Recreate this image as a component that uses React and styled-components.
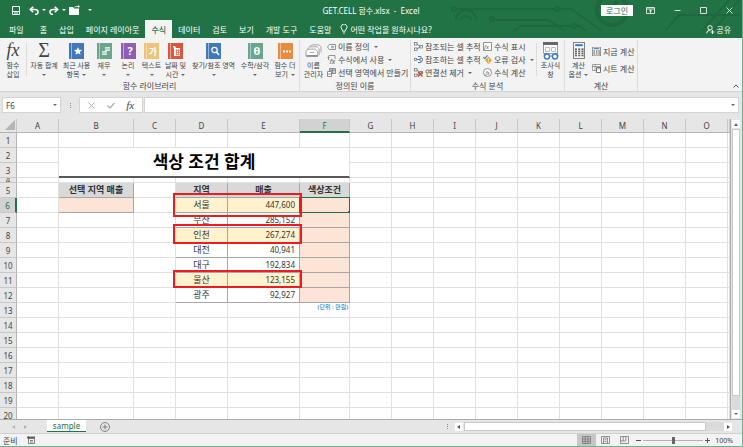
import React, { useState } from "react";
import styled, { createGlobalStyle } from "styled-components";

const GlobalStyle = createGlobalStyle`
  * { box-sizing: border-box; }
  body {
    margin: 0;
    background: #e6e6e6;
    color: #444;
    font-family: "Noto Sans", "Noto Sans CJK KR", sans-serif;
    font-size: 8px;
    line-height: 9px;
  }
  button, input {
    margin: 0;
    padding: 0;
    border: 0;
    background: none;
    color: inherit;
    font: inherit;
    line-height: inherit;
  }
  svg { display: block; flex: none; }
`;

const Window = styled.div`
  display: flex;
  flex-direction: column;
  height: 100vh;
  overflow: hidden;
  border-right: 1px solid #6fb08c;
  border-bottom: 1px solid #6fb08c;
`;

/* ---------- header ---------- */

const Header = styled.header`
  position: relative;
  background: #217346;
  color: #fff;
`;

const Circuit = styled.svg`
  position: absolute;
  top: 0;
  right: 0;
  fill: none;
  stroke: #1e683f;
  stroke-width: 2;
`;

const TitleBar = styled.div`
  position: relative;
  display: grid;
  grid-template-columns: 1fr auto 1fr;
  align-items: center;
  height: 20px;
`;

const QuickAccess = styled.div`
  display: flex;
  align-items: center;
  gap: 3px;
  padding-left: 11px;
`;

const BarButton = styled.button`
  display: flex;
  align-items: center;
  gap: 3px;
  margin-right: ${props => props.$after || 0}px;
`;

const WindowControls = styled.div`
  display: flex;
  align-items: center;
  justify-content: flex-end;
  gap: 19px;
  padding-right: 9px;
`;

const LoginButton = styled.button`
  height: 11px;
  padding: 0 5px;
  background: #fff;
  color: #217346;
  margin-right: -6px;
`;

const TabBar = styled.nav`
  position: relative;
  display: flex;
  height: 18px;
  padding-left: 3px;
`;

const Tab = styled.button`
  padding: 0 6px;
  background: ${props => (props.$active ? "#f3f3f3" : "none")};
  color: ${props => (props.$active ? "#217346" : "#fff")};
  font-weight: ${props => (props.$active ? 500 : 400)};
  white-space: nowrap;

  &:first-child { padding-right: 10px; }
`;

const TellMe = styled(BarButton)`
  margin-left: 3px;
  gap: 2px;
`;

const ShareButton = styled(BarButton)`
  gap: 1px;
  margin-left: auto;
  padding-right: 11px;
`;

/* ---------- ribbon ---------- */

const Ribbon = styled.div`
  display: flex;
  padding: 2px 0 0;
  background: #f3f3f3;
  border-bottom: 1px solid #d2d2d2;
  white-space: nowrap;
`;

const Group = styled.section`
  position: relative;
  border-right: 1px solid #dcdcdc;
`;

const GroupBody = styled.div`
  display: flex;
  height: 39px;
`;

const GroupLabel = styled.div`
  margin: 2px 0 1px;
  text-align: center;
`;

const Tool = styled.button`
  display: flex;
  flex-direction: column;
  align-items: center;
  width: ${props => props.$width}px;
  padding-top: 2px;
  overflow: visible;
`;

const ToolIcon = styled.span`
  display: flex;
  align-items: center;
  justify-content: center;
  height: 17px;
  margin-bottom: 2px;
`;

const ToolLine = styled.span`
  display: flex;
  align-items: center;
  justify-content: center;
  gap: 3px;
  height: 9px;
  font-size: 7px;
`;

const Fx = styled.span`
  font: italic 18px/17px "Liberation Serif", serif;
`;

const Sigma = styled.span`
  font: 20px/17px "Liberation Serif", serif;
`;

const Rule = styled.div`
  width: 1px;
  margin: 3px 0;
  background: #dcdcdc;
`;

const List = styled.div`
  display: flex;
  flex-direction: column;
  width: ${props => props.$width}px;
  padding-top: ${props => props.$top || 0}px;
  padding-left: ${props => props.$left || 0}px;
`;

const ListItem = styled.button`
  display: flex;
  align-items: center;
  gap: 2px;
  height: ${props => props.$height || 13}px;

  i { margin-left: 2px; }
`;

const Caret = styled.i`
  width: 0;
  height: 0;
  border: 2px solid transparent;
  border-top-color: ${props => props.$color || "#666"};
  border-bottom: 0;
`;

const CollapseButton = styled.button`
  align-self: flex-end;
  margin-left: auto;
  padding: 0 3px 3px;
`;

/* ---------- formula bar ---------- */

const FormulaBar = styled.div`
  display: flex;
  align-items: center;
  padding: 5px 3px 6px 2px;
`;

const Field = styled.div`
  display: flex;
  align-items: center;
  height: 16px;
  border: 1px solid #d4d4d4;
  background: #fff;
`;

const NameBox = styled(Field)`
  width: 59px;
  padding: 0 3px;

  input { width: 100%; min-width: 0; outline: 0; }
`;

const FormulaTools = styled(Field)`
  width: 64px;
  justify-content: space-around;
  padding: 0 2px;

  span { font: italic 11px/12px "Liberation Serif", serif; }
`;

const FormulaField = styled(Field)`
  flex: 1;
  margin-left: 1px;
  padding-right: 3px;

  input { flex: 1; outline: 0; }
`;

const Grip = styled.div`
  display: flex;
  flex-direction: column;
  align-items: center;
  gap: 1px;
  width: ${props => props.$width}px;

  i { width: 1px; height: 1px; background: #888; }
`;

/* ---------- sheet ---------- */

const SheetArea = styled.main`
  display: flex;
  flex: 1;
  min-height: 0;
`;

const SheetClip = styled.div`
  flex: 1;
  min-width: 0;
  overflow: hidden;
  border-right: 1px solid #ababab;
`;

const Grid = styled.table`
  width: 100%;
  table-layout: fixed;
  border-spacing: 0;
  background: #fff;
  font-size: 9px;
`;

const ColumnHead = styled.th`
  height: 14px;
  padding: 0;
  border-right: 1px solid #c8c8c8;
  border-bottom: ${props => (props.$active ? "2px solid #217346" : "1px solid #b4b4b4")};
  background: ${props => (props.$active ? "#d2d2d2" : "#e6e6e6")};
  color: ${props => (props.$active ? "#217346" : "#444")};
  font-size: 8px;
  font-weight: 400;
`;

const RowHead = styled.th`
  padding: 0;
  border-right: ${props => (props.$active ? "2px solid #217346" : "1px solid #b4b4b4")};
  border-bottom: 1px solid #c8c8c8;
  background: ${props => (props.$active ? "#d2d2d2" : "#e6e6e6")};
  color: ${props => (props.$active ? "#217346" : "#444")};
  font-size: 8px;
  font-weight: 400;
  vertical-align: bottom;

  div {
    height: ${props => (props.$thin ? 4 : 12)}px;
    line-height: ${props => (props.$thin ? 4 : 12)}px;
    overflow: hidden;
  }
`;

const Corner = styled(ColumnHead)`
  svg { margin: 0 0 0 auto; }
`;

const Row = styled.tr`
  height: ${props => (props.$thin ? 5 : 15)}px;
`;

const fills = {
  head: "#d9d9d9",
  yellow: "#fff2cc",
  peach: "#fce4d6"
};

const Cell = styled.td`
  position: relative;
  padding: 0 4px;
  border-right: 1px solid ${props => (props.$boxed ? "#a6a6a6" : "#e0e0e0")};
  border-bottom: 1px solid ${props => (props.$boxed ? "#a6a6a6" : "#e0e0e0")};
  background: ${props => fills[props.$fill] || "#fff"};
  background-clip: padding-box;
  color: #333;
  font-size: ${props => (props.$number ? 8 : 9)}px;
  font-weight: ${props => (props.$fill === "head" ? 700 : 400)};
  line-height: 12px;
  text-align: ${props => (props.$number ? "right" : "center")};
  white-space: nowrap;
`;

const TitleCell = styled(Cell)`
  border-bottom: 2px solid #595959;
  color: #000;
  font-size: 17px;
  font-weight: 700;
  line-height: 20px;
`;

const UnitCell = styled(Cell)`
  padding: 0 1px;
  color: #0070c0;
  font-size: 6px;
  line-height: 8px;
  text-align: right;
  vertical-align: top;
`;

const Highlight = styled.div`
  position: absolute;
  z-index: 2;
  top: ${props => props.$top}px;
  left: -3px;
  width: 129px;
  height: ${props => props.$height}px;
  border: 2px solid #ed1c24;
`;

const Selection = styled.div`
  position: absolute;
  z-index: 1;
  inset: -1px;
  border: 1px solid #217346;

  &::after {
    content: "";
    position: absolute;
    right: -1px;
    bottom: -1px;
    width: 2px;
    height: 2px;
    background: #217346;
  }
`;

const VScroll = styled.div`
  display: flex;
  flex-direction: column;
  width: 11px;
  padding: 1px 2px 1px 1px;
  background: #e6e6e6;
`;

const ScrollButton = styled.button`
  display: flex;
  align-items: center;
  justify-content: center;
  flex: none;
  width: 8px;
  height: 8px;
  background: #fff;
`;

const VTrack = styled.div`
  display: flex;
  flex: 1;
  flex-direction: column;
  margin: 1px 0 0;
  background: #dadada;
`;

const Thumb = styled.div`
  flex: 0 0 ${props => props.$size}%;
  border: 1px solid #c8c8c8;
  background: #fff;
`;

const TabStrip = styled.div`
  display: flex;
  align-items: center;
  height: 14px;
  border-top: 1px solid #ababab;
  padding-right: 10px;
`;

const SheetNav = styled.div`
  display: flex;
  gap: 9px;
  width: 47px;
  padding-left: 12px;
`;

const SheetTab = styled.button`
  align-self: flex-start;
  width: 39px;
  height: 12px;
  border-bottom: 1px solid #217346;
  background: #fff;
  color: #217346;
`;

const AddSheet = styled.button`
  margin-left: 14px;
`;

const HScroll = styled.div`
  display: flex;
  align-items: center;
  flex: 0 0 39%;
  margin-left: auto;
`;

const HTrack = styled.div`
  display: flex;
  flex: 1;
  height: 9px;
  margin: 0 0 0 1px;
  background: #dadada;
`;

/* ---------- status bar ---------- */

const StatusBar = styled.footer`
  display: flex;
  align-items: center;
  height: 13px;
  padding: 0 9px 0 3px;
  border-top: 1px solid #d0d0d0;
  background: #f3f3f3;
`;

const Views = styled.div`
  display: flex;
  align-self: stretch;
  margin-left: auto;
`;

const ViewButton = styled.button`
  display: flex;
  align-items: center;
  justify-content: center;
  width: 19px;
  background: ${props => (props.$active ? "#c6c6c6" : "none")};
`;

const Zoom = styled.div`
  display: flex;
  align-items: center;
  gap: 2px;
  margin-left: 2px;
`;

const ZoomSlider = styled.input`
  width: 60px;
  height: 9px;
  appearance: none;
  background: linear-gradient(#b4b4b4, #b4b4b4) center / 100% 1px no-repeat;

  &::-webkit-slider-thumb {
    appearance: none;
    width: 3px;
    height: 7px;
    background: #666;
  }
`;

const ZoomValue = styled.span`
  margin-left: 3px;
  font-size: 7px;
`;

/* ---------- icons ---------- */

const Book = ({ color, spine, children }) => (
  <svg width="15" height="16" viewBox="0 0 15 16">
    <rect width="2" height="16" fill={spine || color} />
    <rect x="2.500" width="12.500" height="16" fill={color} />
    {children}
  </svg>
);

const BookText = ({ children, size = 11 }) => (
  <text x="9" y="12" fill="#fff" fontSize={size} fontWeight="700" textAnchor="middle">{children}</text>
);

const NameTagIcon = () => (
  <svg width="9" height="8" viewBox="0 0 9 8" fill="#fff" stroke="#777">
    <path d="M2.5 1.5h6v5h-6l-2-2.5z" strokeWidth=".8" />
    <path d="M4 3.3h3.2M4 4.8h3.2" stroke="#4a86c5" strokeWidth=".8" />
  </svg>
);

const UseInFormulaIcon = () => (
  <svg width="9" height="9" viewBox="0 0 9 9" fill="none" stroke="#777" strokeWidth=".8">
    <path d="M.5 2.5h2M1.5 5V1.5q0-1 1-1h5.500v3.500" />
    <text x="2.500" y="8.500" fontSize="7" fontStyle="italic" fill="#555" stroke="none">fx</text>
  </svg>
);

const FromSelectionIcon = () => (
  <svg width="9" height="9" viewBox="0 0 9 9" fill="#fff" stroke="#777" strokeWidth=".8">
    <path d="M2.500 .5h6v5h-6z" fill="#c4daf0" />
    <path d="M2.500 2.200h6M5.500 .5v5" />
    <path d="M.5 3.500h4v5h-4zM.5 6h4" />
  </svg>
);

const TraceIcon = ({ kind }) => (
  <svg width="9" height="9" viewBox="0 0 9 9" fill="#fff" stroke="#777" strokeWidth=".8">
    {kind === "dependents" ? (
      <g>
        <rect x=".5" y="3.500" width="2" height="2" />
        <rect x="6" y="3.500" width="2.500" height="2.500" />
        <path d="M3 4.500h3M4 1.500h3v2M4 7.500h3v-2" stroke="#3f7fc4" strokeWidth="1" />
      </g>
    ) : (
      <g>
        <rect x=".5" y=".5" width="2.500" height="2.500" />
        <rect x=".5" y="6" width="2.500" height="2.500" />
        <rect x="6" y="3.500" width="2.500" height="2.500" />
        <path d="M3 2l3 2.500M3 7l3-2" stroke="#3f7fc4" strokeWidth="1" />
      </g>
    )}
    {kind === "remove" && <path d="M4 4l4.500 4.500M8.500 4L4 8.500" stroke="#d9472b" strokeWidth="1.400" />}
  </svg>
);

const ShowFormulaIcon = () => (
  <svg width="9" height="9" viewBox="0 0 9 9" fill="#fff" stroke="#777" strokeWidth=".8">
    <path d="M.5 .5h8v8h-8z" />
    <text x="1" y="7" fontSize="6" fontStyle="italic" fill="#555" stroke="none">fx</text>
  </svg>
);

const ErrorCheckIcon = () => (
  <svg width="9" height="9" viewBox="0 0 9 9" fill="none">
    <path d="M5.500 1.500L9 5.200 5.500 9 2 5.200z" fill="#f0a030" />
    <path d="M5.500 3.500v2M5.500 6.500v1" stroke="#fff" strokeWidth=".8" />
    <path d="M.3 2l1.500 1.700L4.500 .4" stroke="#3f7fc4" strokeWidth="1.100" />
  </svg>
);

const EvaluateIcon = () => (
  <svg width="9" height="9" viewBox="0 0 9 9">
    <circle cx="4.500" cy="4.500" r="4" fill="#fff" stroke="#777" strokeWidth=".8" />
    <text x="4.500" y="6.500" fontSize="5" fontStyle="italic" textAnchor="middle" fill="#555">fx</text>
  </svg>
);

const NameManagerIcon = () => (
  <svg width="17" height="14" viewBox="0 0 18 15" fill="#fff" stroke="#909090" strokeWidth=".9">
    <path d="M5 7V3l2-2h8l2 2v6" />
    <path d="M3 9V5l2-2h8l2 2v7" />
    <path d="M1 13V8l2-2.500h8L13.500 8v5z" />
    <path d="M1.500 12.800h12" strokeWidth="2" />
    <path d="M5 9h5" />
  </svg>
);

const WatchIcon = () => (
  <svg width="18" height="18" viewBox="0 0 18 18" fill="none">
    <path d="M1.500 .5h14v11h-14z" fill="#fff" stroke="#999" />
    <path d="M1 0h15v3H1z" fill="#666" />
    <path d="M3.500 5.500h4v4h-4zM9.500 5.500h4v4h-4z" stroke="#bbb" />
    <circle cx="5" cy="14.500" r="2.500" fill="#fff" stroke="#3f7fc4" strokeWidth="1.400" />
    <circle cx="13" cy="14.500" r="2.500" fill="#fff" stroke="#3f7fc4" strokeWidth="1.400" />
    <path d="M7.500 14.500q1.500-1.500 3 0M2 14.500q0-3.500 2.500-3.500M16 14.500q0-3.500-2.500-3.500" stroke="#3f7fc4" />
  </svg>
);

const CalculatorIcon = ({ width = 12, height = 17 }) => (
  <svg width={width} height={height} viewBox="0 0 11 16" preserveAspectRatio="none">
    <rect x=".5" y=".5" width="10" height="15" fill="#fff" stroke="#808080" />
    <rect x="2" y="2" width="7" height="2" fill="#3f7fc4" />
    {[6, 8, 10, 12].map(y =>
      [2, 5, 8].map(x => <rect key={x + "-" + y} x={x - 0.3} y={y} width="2" height="1.500" fill="#666" />)
    )}
  </svg>
);

const SheetCalcIcon = () => (
  <svg width="9" height="9" viewBox="0 0 9 9" fill="none" stroke="#888" strokeWidth=".8">
    <path d="M.5 .5h8v6h-8zM.5 2.500h8M3 .5v6" fill="#fff" />
    <path d="M4.500 3.500h4v5h-4z" fill="#fff" stroke="#555" />
    <path d="M5.300 4.800h2.400" stroke="#3f7fc4" />
  </svg>
);

/* ---------- data ---------- */

const tabs = ["파일", "홈", "삽입", "페이지 레이아웃", "수식", "데이터", "검토", "보기", "개발 도구", "도움말"];

const library = [
  { lines: ["자동 합계", ""], width: 34, icon: <Sigma>Σ</Sigma> },
  {
    lines: ["최근 사용", "항목"], width: 31,
    icon: <Book color="#4178b8"><path d="M9 4l1.200 2.700 2.900.3-2.200 1.900.7 2.900L9 10.300l-2.600 1.500.7-2.900L4.900 7l2.900-.3z" fill="#fff" /></Book>
  },
  {
    lines: ["재무", ""], width: 24,
    icon: <Book color="#6aa58e"><path d="M8 4h5v4H8zM5 8h5v4H5z" fill="#d8ebe3" /><path d="M8 6h5M5 10h5" stroke="#6aa58e" strokeWidth=".6" /></Book>
  },
  { lines: ["논리", ""], width: 24, icon: <Book color="#8f5fb5"><BookText>?</BookText></Book> },
  { lines: ["텍스트", ""], width: 23, icon: <Book color="#edc477"><BookText size={9}>가</BookText></Book> },
  {
    lines: ["날짜 및", "시간"], width: 25,
    icon: (
      <Book color="#d9573a">
        <path d="M5 3h2l1 2h4v8H6V6z" fill="#fff" />
        <path d="M7.500 7.500h4M7.500 9.500h4M7.500 11.500h4M8.500 6v6.500M10.500 6v6.500" stroke="#d9573a" strokeWidth=".6" />
      </Book>
    )
  },
  {
    lines: ["찾기/참조 영역", ""], width: 51,
    icon: <Book color="#4178b8"><circle cx="8.500" cy="7" r="2.700" fill="none" stroke="#fff" strokeWidth="1.200" /><path d="M10.500 9l2.500 3" stroke="#fff" strokeWidth="1.500" /></Book>
  },
  { lines: ["수학/삼각", ""], width: 32, icon: <Book color="#6aa58e"><BookText>θ</BookText></Book> },
  {
    lines: ["함수 더", "보기"], width: 28,
    icon: <Book color="#e88b3c"><path d="M5 7.500h2v2H5zM8 7.500h2v2H8zM11 7.500h2v2h-2z" fill="#fff" /></Book>
  }
];

const columns = [
  ["A", 42], ["B", 75], ["C", 42], ["D", 52], ["E", 72], ["F", 50],
  ["G", 42], ["H", 42], ["I", 42], ["J", 42], ["K", 42], ["L", 42], ["M", 42], ["N", 42], ["O", 42]
];

const sales = {
  6: ["서울", "447,600", { top: -5, height: 24 }],
  7: ["부산", "285,152"],
  8: ["인천", "267,274", { top: -4, height: 20 }],
  9: ["대전", "40,941"],
  10: ["대구", "192,834"],
  11: ["울산", "123,155", { top: -3, height: 18 }],
  12: ["광주", "92,927"]
};

const blanks = (from, to) => {
  let cells = [];
  for (let i = from; i <= to; i++) {
    cells.push(<Cell key={i} />);
  }
  return cells;
};

const SheetRow = ({ n }) => {
  const entry = sales[n];
  const thin = n === 4;

  return (
    <Row $thin={thin}>
      <RowHead scope="row" $active={n === 6} $thin={thin}><div>{n}</div></RowHead>
      <Cell />
      {n === 2 && <TitleCell colSpan={5} rowSpan={2}>색상 조건 합계</TitleCell>}
      {n === 5 && (
        <>
          <Cell $fill="head" $boxed>선택 지역 매출</Cell>
          <Cell />
          <Cell $fill="head" $boxed>지역</Cell>
          <Cell $fill="head" $boxed>매출</Cell>
          <Cell $fill="head" $boxed>색상조건</Cell>
        </>
      )}
      {entry && (
        <>
          {n === 6 ? <Cell $fill="peach" $boxed /> : <Cell />}
          <Cell />
          <Cell $boxed $fill={entry[2] && "yellow"}>
            {entry[0]}
            {entry[2] && <Highlight $top={entry[2].top} $height={entry[2].height} />}
          </Cell>
          <Cell $boxed $number $fill={entry[2] && "yellow"}>{entry[1]}</Cell>
          <Cell $boxed $fill="peach">{n === 6 && <Selection />}</Cell>
        </>
      )}
      {n === 13 && (
        <>
          {blanks(2, 5)}
          <UnitCell>(단위 : 만원)</UnitCell>
        </>
      )}
      {!entry && ![2, 3, 5, 13].includes(n) && blanks(2, 6)}
      {blanks(7, 16)}
    </Row>
  );
};

const App = () => {
  const [tab, setTab] = useState("수식");
  const [name, setName] = useState("F6");
  const [formula, setFormula] = useState("");
  const [zoom, setZoom] = useState(100);

  return (
    <Window>
      <GlobalStyle />
      <Header>
        <Circuit width="303" height="31" viewBox="0 0 303 31">
          <circle cx="15" cy="9" r="2" />
          <path d="M18 9h97M121 9h11l31 22" />
          <circle cx="118" cy="9" r="2" />
          <path d="M17 20a10 10 0 0 1 20 0M22 20a5 4 0 0 1 10 0" />
          <circle cx="53" cy="19" r="2" />
          <path d="M56 20h54l16 11M75 31l7-5h50M138 26h3l6 5" />
          <circle cx="135" cy="26" r="2" />
          <circle cx="173" cy="10" r="15" strokeWidth="4" />
          <path d="M168 17l10-16" strokeWidth="4" />
          <path d="M226 31l14-16h60M263 31L290 0M274 31L300 0" />
        </Circuit>
        <TitleBar>
          <QuickAccess>
            <BarButton $after={5} aria-label="저장">
              <svg width="10" height="9" viewBox="0 0 10 9" fill="none" stroke="#fff">
                <path d="M1.500 .5h7v8h-7zM1.500 5.500h7" />
                <path d="M4 6v2.500h2V6" />
              </svg>
            </BarButton>
            <BarButton aria-label="실행 취소">
              <svg width="10" height="9" viewBox="0 0 10 9" fill="none" stroke="#fff" strokeWidth="1.600">
                <path d="M1.500 3.500H6q3 0 3 2.500t-3 2.300" />
                <path d="M4.200 .8L1.300 3.500l2.900 2.700" />
              </svg>
              <Caret $color="#fff" />
            </BarButton>
            <BarButton aria-label="다시 실행">
              <svg width="10" height="9" viewBox="0 0 10 9" fill="none" stroke="#fff" strokeWidth="1.600">
                <path d="M8.500 3.500H4q-3 0-3 2.500t3 2.300" />
                <path d="M5.800 .8l2.900 2.700-2.900 2.700" />
              </svg>
              <Caret $color="#fff" />
            </BarButton>
            <BarButton $after={5} aria-label="열기">
              <svg width="11" height="10" viewBox="0 0 11 10" fill="#fff">
                <path d="M0 2h4l1 1.500h5V10H0z" />
                <path d="M5 2.500q1-2 4-1.500V0l2 1.500-2 1.500V2q-2-.5-3 .5z" />
              </svg>
            </BarButton>
            <BarButton aria-label="빠른 실행 도구 모음 사용자 지정"><Caret $color="#fff" /></BarButton>
          </QuickAccess>
          <div>GET.CELL 함수.xlsx&nbsp; -&nbsp; Excel</div>
          <WindowControls>
            <LoginButton>로그인</LoginButton>
            <BarButton aria-label="리본 메뉴 표시 옵션">
              <svg width="9" height="7" viewBox="0 0 9 7" fill="none" stroke="#fff" strokeWidth=".8">
                <path d="M.5 .5h8v6h-8zM.5 2h8M4.500 6V3M3 4.300L4.500 3 6 4.300" />
              </svg>
            </BarButton>
            <BarButton aria-label="최소화">
              <svg width="7" height="7" viewBox="0 0 7 7" stroke="#fff" strokeWidth=".8"><path d="M.5 3.500h6" /></svg>
            </BarButton>
            <BarButton aria-label="최대화">
              <svg width="7" height="7" viewBox="0 0 7 7" fill="none" stroke="#fff" strokeWidth=".8"><path d="M.5 .5h6v6h-6z" /></svg>
            </BarButton>
            <BarButton aria-label="닫기">
              <svg width="7" height="7" viewBox="0 0 7 7" stroke="#fff" strokeWidth=".8"><path d="M.5 .5l6 6M6.500 .5l-6 6" /></svg>
            </BarButton>
          </WindowControls>
        </TitleBar>
        <TabBar>
          {tabs.map(label => (
            <Tab key={label} $active={label === tab} onClick={() => setTab(label)}>{label}</Tab>
          ))}
          <TellMe>
            <svg width="8" height="10" viewBox="0 0 8 10" fill="none" stroke="#fff" strokeWidth=".9">
              <path d="M2.700 7.200Q2.700 6 1.700 5A3 3 0 1 1 6.300 5Q5.300 6 5.300 7.200zM2.900 9h2.200" />
            </svg>
            어떤 작업을 원하시나요?
          </TellMe>
          <ShareButton>
            <svg width="9" height="9" viewBox="0 0 9 9" fill="none" stroke="#fff" strokeWidth=".9">
              <circle cx="4" cy="2.800" r="2.200" />
              <path d="M.6 8.500Q.8 5.200 4 5.200M6.500 5v4M4.500 7h4" />
            </svg>
            공유
          </ShareButton>
        </TabBar>
      </Header>

      <Ribbon>
        <Group>
          <GroupBody>
            <Tool $width={26}>
              <ToolIcon><Fx>fx</Fx></ToolIcon>
              <ToolLine>함수</ToolLine>
              <ToolLine>삽입</ToolLine>
            </Tool>
            <Rule />
            {library.map(item => (
              <Tool key={item.lines[0]} $width={item.width}>
                <ToolIcon>{item.icon}</ToolIcon>
                <ToolLine>{item.lines[0]}</ToolLine>
                <ToolLine>{item.lines[1]}<Caret /></ToolLine>
              </Tool>
            ))}
          </GroupBody>
          <GroupLabel>함수 라이브러리</GroupLabel>
        </Group>
        <Group>
          <GroupBody>
            <Tool $width={27}>
              <ToolIcon><NameManagerIcon /></ToolIcon>
              <ToolLine>이름</ToolLine>
              <ToolLine>관리자</ToolLine>
            </Tool>
            <List $width={83}>
              <ListItem><NameTagIcon />이름 정의<Caret /></ListItem>
              <ListItem><UseInFormulaIcon />수식에서 사용<Caret /></ListItem>
              <ListItem><FromSelectionIcon />선택 영역에서 만들기</ListItem>
            </List>
          </GroupBody>
          <GroupLabel>정의된 이름</GroupLabel>
        </Group>
        <Group>
          <GroupBody>
            <List $width={72} $left={3}>
              <ListItem><TraceIcon kind="precedents" />참조되는 셀 추적</ListItem>
              <ListItem><TraceIcon kind="dependents" />참조하는 셀 추적</ListItem>
              <ListItem><TraceIcon kind="remove" />연결선 제거<Caret /></ListItem>
            </List>
            <List $width={53}>
              <ListItem><ShowFormulaIcon />수식 표시</ListItem>
              <ListItem><ErrorCheckIcon />오류 검사<Caret /></ListItem>
              <ListItem><EvaluateIcon />수식 계산</ListItem>
            </List>
            <Rule />
            <Tool $width={27}>
              <ToolIcon><WatchIcon /></ToolIcon>
              <ToolLine>조사식</ToolLine>
              <ToolLine>창</ToolLine>
            </Tool>
          </GroupBody>
          <GroupLabel>수식 분석</GroupLabel>
        </Group>
        <Group>
          <GroupBody>
            <Tool $width={27}>
              <ToolIcon><CalculatorIcon /></ToolIcon>
              <ToolLine>계산</ToolLine>
              <ToolLine>옵션<Caret /></ToolLine>
            </Tool>
            <List $width={45} $top={3}>
              <ListItem $height={17}><CalculatorIcon width={9} height={9} />지금 계산</ListItem>
              <ListItem $height={17}><SheetCalcIcon />시트 계산</ListItem>
            </List>
          </GroupBody>
          <GroupLabel>계산</GroupLabel>
        </Group>
        <CollapseButton aria-label="리본 메뉴 축소">
          <svg width="6" height="4" viewBox="0 0 6 4" fill="none" stroke="#555"><path d="M.5 3.500L3 1l2.500 2.500" /></svg>
        </CollapseButton>
      </Ribbon>

      <FormulaBar>
        <NameBox>
          <input aria-label="이름 상자" value={name} onChange={e => setName(e.target.value)} />
          <Caret />
        </NameBox>
        <Grip $width={18}><i /><i /><i /></Grip>
        <FormulaTools>
          <button aria-label="취소">
            <svg width="7" height="7" viewBox="0 0 7 7" stroke="#b0b0b0"><path d="M.5 .5l6 6M6.500 .5l-6 6" /></svg>
          </button>
          <button aria-label="입력">
            <svg width="8" height="7" viewBox="0 0 8 7" fill="none" stroke="#b0b0b0" strokeWidth="1.300"><path d="M.5 3.500L3 6l4.500-5" /></svg>
          </button>
          <button aria-label="함수 삽입"><span>fx</span></button>
        </FormulaTools>
        <FormulaField>
          <input aria-label="수식 입력줄" value={formula} onChange={e => setFormula(e.target.value)} />
          <Caret />
        </FormulaField>
      </FormulaBar>

      <SheetArea>
        <SheetClip>
          <Grid>
            <colgroup>
              <col width="17" />
              {columns.map(([label, width]) => <col key={label} width={width} />)}
              <col />
            </colgroup>
            <thead>
              <tr>
                <Corner aria-label="모두 선택">
                  <svg width="11" height="11" viewBox="0 0 11 11" fill="#b4b4b4"><path d="M10 0v10H0z" /></svg>
                </Corner>
                {columns.map(([label]) => (
                  <ColumnHead key={label} scope="col" $active={label === "F"}>{label}</ColumnHead>
                ))}
                <ColumnHead />
              </tr>
            </thead>
            <tbody>
              {Array.from({ length: 20 }, (_, i) => <SheetRow key={i} n={i + 1} />)}
            </tbody>
          </Grid>
        </SheetClip>
        <VScroll>
          <ScrollButton aria-label="위로">
            <svg width="4" height="3" viewBox="0 0 4 3" fill="#666"><path d="M2 0l2 3H0z" /></svg>
          </ScrollButton>
          <VTrack><Thumb $size={95} /></VTrack>
          <ScrollButton aria-label="아래로"><Caret /></ScrollButton>
        </VScroll>
      </SheetArea>

      <TabStrip>
        <SheetNav>
          <button aria-label="이전 시트">
            <svg width="3" height="4" viewBox="0 0 3 4" fill="#b4b4b4"><path d="M3 0v4L0 2z" /></svg>
          </button>
          <button aria-label="다음 시트">
            <svg width="3" height="4" viewBox="0 0 3 4" fill="#b4b4b4"><path d="M0 0v4l3-2z" /></svg>
          </button>
        </SheetNav>
        <SheetTab>sample</SheetTab>
        <AddSheet aria-label="새 시트">
          <svg width="10" height="10" viewBox="0 0 10 10" fill="none" stroke="#777" strokeWidth=".9">
            <circle cx="5" cy="5" r="4.500" />
            <path d="M5 2.500v5M2.500 5h5" />
          </svg>
        </AddSheet>
        <HScroll>
          <Grip $width={1}><i /><i /><i /></Grip>
          <Grip $width={7} />
          <ScrollButton aria-label="왼쪽으로">
            <svg width="3" height="4" viewBox="0 0 3 4" fill="#555"><path d="M3 0v4L0 2z" /></svg>
          </ScrollButton>
          <HTrack><Thumb $size={93} /></HTrack>
          <ScrollButton aria-label="오른쪽으로">
            <svg width="3" height="4" viewBox="0 0 3 4" fill="#555"><path d="M0 0v4l3-2z" /></svg>
          </ScrollButton>
        </HScroll>
      </TabStrip>

      <StatusBar>
        <BarButton $after={9}>준비</BarButton>
        <BarButton aria-label="매크로 기록">
          <svg width="8" height="8" viewBox="0 0 8 8" fill="none" stroke="#666" strokeWidth=".8">
            <path d="M1.500 2.500h6v5h-6zM3 4.500h3M3 6h3" />
            <path d="M3 1.500h5" strokeWidth="2" />
            <circle cx="1.500" cy="1.500" r="1.300" fill="#444" stroke="none" />
          </svg>
        </BarButton>
        <Views>
          <ViewButton $active aria-label="기본">
            <svg width="9" height="8" viewBox="0 0 9 8" fill="none" stroke="#777" strokeWidth=".8"><path d="M.5 .5h8v7h-8zM.5 3h8M.5 5.300h8M3.200 .5v7M5.800 .5v7" /></svg>
          </ViewButton>
          <ViewButton aria-label="페이지 레이아웃">
            <svg width="9" height="8" viewBox="0 0 9 8" fill="none" stroke="#777" strokeWidth=".8"><path d="M.5 .5h8v7h-8zM2.500 2h4v5.500M2.500 2v5.500M3.500 3.800h2M3.500 5.500h2" /></svg>
          </ViewButton>
          <ViewButton aria-label="페이지 나누기 미리 보기">
            <svg width="9" height="8" viewBox="0 0 9 8" fill="none" stroke="#777" strokeWidth=".8"><path d="M.5 .5h8v7h-8zM3.200 .5v4.500M5.800 .5v4.500M.5 5h5.300" /></svg>
          </ViewButton>
        </Views>
        <Zoom>
          <button aria-label="축소">
            <svg width="5" height="5" viewBox="0 0 5 5" stroke="#555"><path d="M0 2.500h5" /></svg>
          </button>
          <ZoomSlider type="range" aria-label="확대/축소" min="0" max="200" value={zoom} onChange={e => setZoom(Number(e.target.value))} />
          <button aria-label="확대">
            <svg width="5" height="5" viewBox="0 0 5 5" stroke="#555"><path d="M0 2.500h5M2.500 0v5" /></svg>
          </button>
          <ZoomValue>{zoom}%</ZoomValue>
        </Zoom>
      </StatusBar>
    </Window>
  );
};

export default App;
